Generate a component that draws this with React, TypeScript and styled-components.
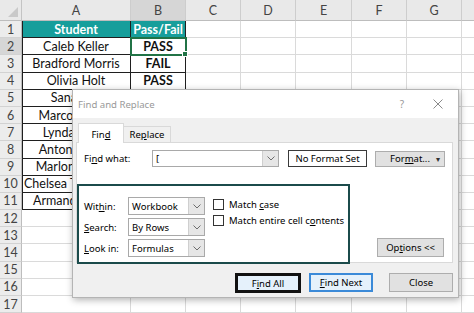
import * as React from 'react'
import styled, { createGlobalStyle, css } from 'styled-components'

const CELL_FONT = `Lato, "Liberation Sans", sans-serif`
const UI_FONT = `"Noto Sans", "Open Sans", sans-serif`

const TEAL = '#169e9b'
const GRID = '#dadada'
const LINE = '#1f1f1f'
const SEL = '#217346'

const COL_WIDTHS = [109, 55, 55, 55, 56, 55, 55, 40]
// the last column is only a sliver at the right edge, its letter is off-screen
const LETTERS = ['A', 'B', 'C', 'D', 'E', 'F', 'G', '']
const ROW_COUNT = 17

interface Entry {
  name: string
  result: string
}

const STUDENTS: Entry[] = [
  { name: 'Caleb Keller', result: 'PASS' },
  { name: 'Bradford Morris', result: 'FAIL' },
  { name: 'Olivia Holt', result: 'PASS' },
  { name: 'Sana Rao', result: 'PASS' },
  { name: 'Marco Santos', result: 'FAIL' },
  { name: 'Lynda Smith', result: 'PASS' },
  { name: 'Anton Becker', result: 'PASS' },
  { name: 'Marlon Brooks', result: 'FAIL' },
  { name: 'Chelsea Thompson', result: 'PASS' },
  { name: 'Armando Reyes', result: 'PASS' }
]

const GlobalStyle = createGlobalStyle`
  html, body {
    margin: 0;
    padding: 0;
    background: #fff;
    overflow: hidden;
  }
`

function App () {
  return (
    <Page>
      <GlobalStyle />
      <Sheet>
        <Corner />
        {LETTERS.map((l, c) => (
          <ColHead key={c} $active={l === 'B'}>{l}</ColHead>
        ))}
        {Array.from({ length: ROW_COUNT }, (_, i) => {
          const row = i + 1
          const student = row >= 2 ? STUDENTS[row - 2] : undefined
          const inTable = row <= 11
          return (
            <React.Fragment key={row}>
              <RowHead $active={row === 2}>{row}</RowHead>
              {LETTERS.map((_l, c) => {
                if (c === 0 && inTable) {
                  return row === 1
                    ? <Cell key={c} $table $first $head>Student</Cell>
                    : <Cell key={c} $table $first>{student?.name}</Cell>
                }
                if (c === 1 && inTable) {
                  return row === 1
                    ? <Cell key={c} $table $head>Pass/Fail</Cell>
                    : <Cell key={c} $table $bold $selected={row === 2}>{student?.result}</Cell>
                }
                return <Cell key={c} />
              })}
            </React.Fragment>
          )
        })}
      </Sheet>

      <Dialog>
        <TitleBar>
          <Title>Find and Replace</Title>
          <HelpMark>?</HelpMark>
          <svg width='10' height='10' viewBox='0 0 10 10'>
            <path d='M0.5 0.5 L9.5 9.5 M9.5 0.5 L0.5 9.5' stroke='#8a8a8a' strokeWidth='1' fill='none' />
          </svg>
        </TitleBar>

        <Body>
          <TabStrip>
            <Tab $active $width={46}>Fin<Key>d</Key></Tab>
            <Tab $width={48}>Re<Key>p</Key>lace</Tab>
          </TabStrip>

          <Panel>
            <FindRow>
              <FieldLabel>Fi<Key>n</Key>d what:</FieldLabel>
              <Combo $width={127}>
                <ComboText>[</ComboText>
                <ComboArrow><Chevron /></ComboArrow>
              </Combo>
              <NoFormat>No Format Set</NoFormat>
              <Button $width={70} $height={16} $ml={8}>
                For<Key>m</Key>at...
                <Caret>▾</Caret>
              </Button>
            </FindRow>

            <LowerRow>
              <OptionsBox>
                <SelectGrid>
                  <FieldLabel>Wit<Key>h</Key>in:</FieldLabel>
                  <Combo $width={77} $height={18}>
                    <ComboText>Workbook</ComboText>
                    <ComboArrow><Chevron /></ComboArrow>
                  </Combo>
                  <FieldLabel><Key>S</Key>earch:</FieldLabel>
                  <Combo $width={77} $height={18}>
                    <ComboText>By Rows</ComboText>
                    <ComboArrow><Chevron /></ComboArrow>
                  </Combo>
                  <FieldLabel><Key>L</Key>ook in:</FieldLabel>
                  <Combo $width={77} $height={18}>
                    <ComboText>Formulas</ComboText>
                    <ComboArrow><Chevron /></ComboArrow>
                  </Combo>
                </SelectGrid>
                <CheckList>
                  <CheckRow><CheckBox />Match <Key>c</Key>ase</CheckRow>
                  <CheckRow><CheckBox />Match entire cell c<Key>o</Key>ntents</CheckRow>
                </CheckList>
              </OptionsBox>
              <Button $width={67} $height={19} $ml='auto' $mr={8} $mb={7}>
                Op<Key>t</Key>ions &lt;&lt;
              </Button>
            </LowerRow>
          </Panel>

          <ButtonRow>
            <Button $width={66} $height={20} $variant='marked'>F<Key>i</Key>nd All</Button>
            <Button $width={64} $height={19} $ml={8} $variant='focused'><Key>F</Key>ind Next</Button>
            <Button $width={64} $height={19} $ml={16}>Close</Button>
          </ButtonRow>
        </Body>
      </Dialog>
    </Page>
  )
}

function Chevron () {
  return (
    <svg width='8' height='5' viewBox='0 0 8 5'>
      <path d='M0.5 0.5 L4 4 L7.5 0.5' stroke='#6d6d6d' strokeWidth='1' fill='none' />
    </svg>
  )
}

const Page = styled.div`
  position: relative;
  width: 474px;
  height: 313px;
  overflow: hidden;
  background: #fff;
`

const Sheet = styled.div`
  display: grid;
  grid-template-columns: 22px ${COL_WIDTHS.map(w => `${w}px`).join(' ')};
  grid-template-rows: 21px repeat(${ROW_COUNT}, 17.2px);
  font-family: ${CELL_FONT};
`

const Corner = styled.div`
  position: relative;
  background: #e9e9e9;
  border-right: 1px solid #c4c4c4;
  border-bottom: 1px solid #bdbdbd;
  box-sizing: border-box;

  &::after {
    content: '';
    position: absolute;
    right: 3px;
    bottom: 3px;
    border-left: 10px solid transparent;
    border-bottom: 10px solid #c9c9c9;
  }
`

const ColHead = styled.div<{ $active?: boolean }>`
  display: flex;
  align-items: center;
  justify-content: center;
  box-sizing: border-box;
  background: ${p => (p.$active ? '#d6d6d6' : '#e9e9e9')};
  border-right: 1px solid #cdcdcd;
  border-bottom: 1px solid #bdbdbd;
  color: #444;
  font-size: 12.5px;
`

const RowHead = styled.div<{ $active?: boolean }>`
  display: flex;
  align-items: center;
  justify-content: center;
  box-sizing: border-box;
  background: ${p => (p.$active ? '#d6d6d6' : '#ececec')};
  border-right: 1px solid #bdbdbd;
  border-bottom: 1px solid #d2d2d2;
  color: #444;
  font-size: 12.5px;
`

interface CellProps {
  $table?: boolean
  $first?: boolean
  $head?: boolean
  $bold?: boolean
  $selected?: boolean
}

const Cell = styled.div<CellProps>`
  position: relative;
  display: flex;
  align-items: center;
  justify-content: center;
  box-sizing: border-box;
  overflow: hidden;
  white-space: nowrap;
  font-size: 12.5px;
  color: #111;
  border-right: 1px solid ${p => (p.$table ? LINE : GRID)};
  border-bottom: 1px solid ${p => (p.$table ? LINE : GRID)};
  ${p => p.$first && css`box-shadow: inset 1px 0 0 ${LINE};`}
  ${p => p.$bold && css`font-weight: 700;`}
  ${p => p.$head && css`
    background: ${TEAL};
    color: #fff;
    font-weight: 700;
  `}
  ${p => p.$selected && css`
    overflow: visible;
    z-index: 1;
    outline: 2px solid ${SEL};
    outline-offset: -1px;

    &::after {
      content: '';
      position: absolute;
      right: -3px;
      bottom: -3px;
      width: 4px;
      height: 4px;
      background: ${SEL};
      border: 1px solid #fff;
    }
  `}
`

const Dialog = styled.div`
  position: absolute;
  left: 72px;
  top: 89px;
  width: 387px;
  height: 209px;
  box-sizing: border-box;
  display: flex;
  flex-direction: column;
  background: #f0f0f0;
  border: 1px solid #b4b4b4;
  box-shadow: 1px 2px 7px rgba(0, 0, 0, 0.3);
  font-family: ${UI_FONT};
  font-size: 9.5px;
  color: #000;
`

const TitleBar = styled.div`
  height: 28px;
  display: flex;
  align-items: center;
  padding: 0 15px 0 5px;
  background: #fff;
  color: #999;
`

const Title = styled.div`
  flex: 1;
  font-size: 9.6px;
`

const HelpMark = styled.div`
  margin-right: 29px;
  font-size: 10px;
`

const Body = styled.div`
  flex: 1;
  display: flex;
  flex-direction: column;
  padding: 5px 5px 0 3px;
`

const TabStrip = styled.div`
  display: flex;
  align-items: flex-end;
  padding-left: 2px;
  margin-bottom: -1px;
  position: relative;
  z-index: 1;
`

const Tab = styled.div<{ $active?: boolean, $width: number }>`
  width: ${p => p.$width}px;
  height: ${p => (p.$active ? 20 : 17)}px;
  box-sizing: border-box;
  display: flex;
  align-items: center;
  justify-content: center;
  border: 1px solid #d9d9d9;
  ${p => p.$active
    ? css`
      border-bottom: none;
      background: #fff;
      position: relative;
      z-index: 1;
      padding-top: 1px;
    `
    : css`
      margin-left: -1px;
      background: #f0f0f0;
    `}
`

const Key = styled.span`
  text-decoration: underline;
  text-underline-offset: 1px;
`

const Panel = styled.div`
  height: 121px;
  box-sizing: border-box;
  display: flex;
  flex-direction: column;
  background: #fff;
  border: 1px solid #d9d9d9;
`

const FindRow = styled.div`
  display: flex;
  align-items: center;
  height: 17px;
  margin-top: 7px;
  padding-left: 7px;
`

const FieldLabel = styled.div`
  width: 68px;
  white-space: nowrap;
`

const Combo = styled.div<{ $width: number, $height?: number }>`
  width: ${p => p.$width}px;
  height: ${p => p.$height ?? 17}px;
  box-sizing: border-box;
  display: flex;
  background: #fff;
  border: 1px solid #a9a9a9;
`

const ComboText = styled.div`
  flex: 1;
  display: flex;
  align-items: center;
  padding-left: 3px;
`

const ComboArrow = styled.div`
  width: 15px;
  display: flex;
  align-items: center;
  justify-content: center;
  background: #e6e6e6;
  border-left: 1px solid #cfcfcf;
`

const NoFormat = styled.div`
  width: 79px;
  height: 17px;
  margin-left: 9px;
  box-sizing: border-box;
  display: flex;
  align-items: center;
  justify-content: center;
  border: 1px solid #3a3a3a;
  background: #fff;
`

interface ButtonProps {
  $width: number
  $height: number
  $ml?: number | 'auto'
  $mr?: number
  $mb?: number
  $variant?: 'plain' | 'marked' | 'focused'
}

const px = (v?: number | 'auto') => (v === 'auto' ? 'auto' : `${v ?? 0}px`)

const Button = styled.div<ButtonProps>`
  position: relative;
  width: ${p => p.$width}px;
  height: ${p => p.$height}px;
  margin: 0 ${p => px(p.$mr)} ${p => px(p.$mb)} ${p => px(p.$ml)};
  box-sizing: border-box;
  display: flex;
  align-items: center;
  justify-content: center;
  white-space: nowrap;
  background: #e1e1e1;
  border: 1px solid #adadad;
  ${p => p.$variant === 'marked' && css`
    background: #e5f1fb;
    border: 3px solid #111;
  `}
  ${p => p.$variant === 'focused' && css`
    background: #e5f1fb;
    border: 2px solid #3b8ad8;
  `}
`

const Caret = styled.span`
  position: absolute;
  right: 4px;
  font-size: 8px;
  color: #333;
`

const LowerRow = styled.div`
  display: flex;
  align-items: flex-end;
  margin-top: 17px;
`

const OptionsBox = styled.div`
  width: 273px;
  height: 80px;
  flex-shrink: 0;
  box-sizing: border-box;
  display: flex;
  align-items: flex-start;
  padding: 11px 0 0 5px;
  border: 2px solid #1b4b4b;
`

const SelectGrid = styled.div`
  display: grid;
  grid-template-columns: 44px 77px;
  grid-auto-rows: 18px;
  row-gap: 3px;
  align-items: center;
`

const CheckList = styled.div`
  display: flex;
  flex-direction: column;
  gap: 4px;
  margin: 1px 0 0 8px;
`

const CheckRow = styled.div`
  display: flex;
  align-items: center;
  height: 12px;
  white-space: pre;
`

const CheckBox = styled.div`
  width: 11px;
  height: 11px;
  margin-right: 5px;
  box-sizing: border-box;
  border: 1px solid #333;
  background: #fff;
`

const ButtonRow = styled.div`
  display: flex;
  justify-content: flex-end;
  align-items: flex-start;
  margin-top: 10px;
`

export default App
